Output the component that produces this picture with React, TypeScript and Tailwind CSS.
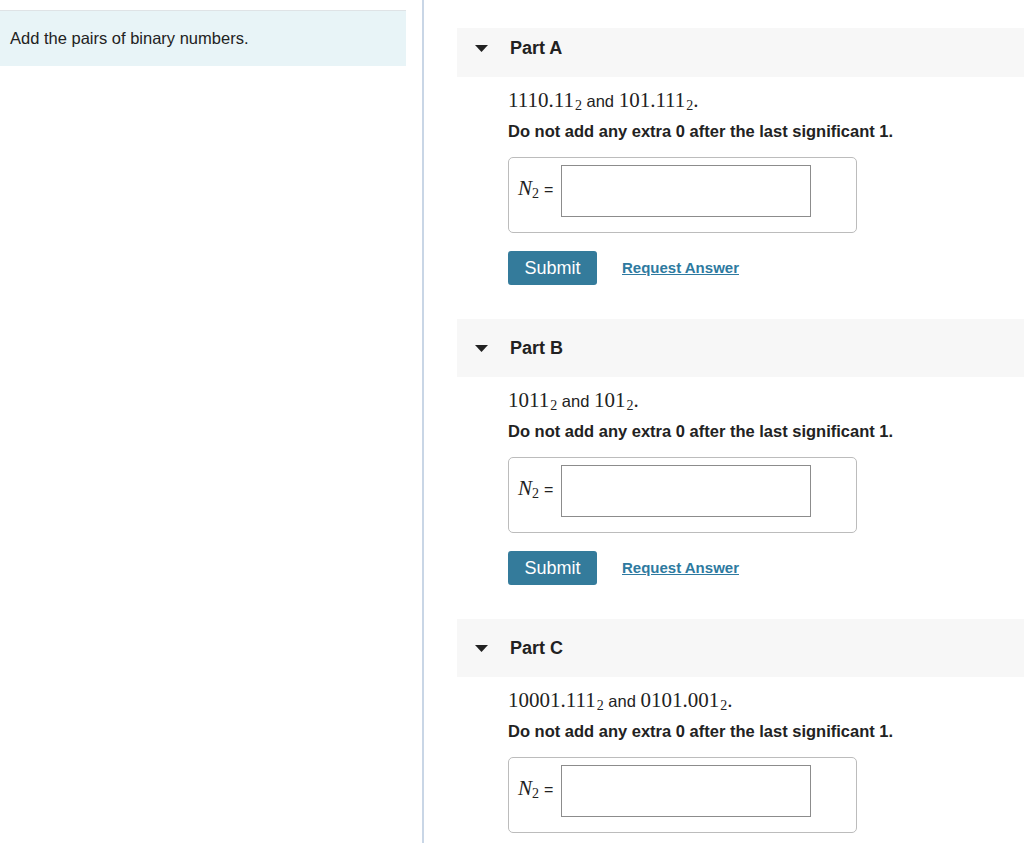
const SANS = "font-['Liberation_Sans',Arial,sans-serif]";
const SERIF = "font-['Liberation_Serif','Times_New_Roman',serif]";

function Num({ value }: { value: string }) {
  return (
    <span className={`${SERIF} text-[21px]`}>
      {value}
      <span className="relative top-[3px] ml-[1px] text-[14px]">2</span>
    </span>
  );
}

type PartProps = {
  name: string;
  a: string;
  b: string;
  first?: boolean;
  last?: boolean;
};

function Part({ name, a, b, first, last }: PartProps) {
  return (
    <section>
      <div
        className={`flex items-center bg-[#f7f7f7] pl-[18px] ${first ? "h-[49px] pb-[9px]" : "h-[58px]"}`}
      >
        <svg width="13" height="7" viewBox="0 0 13 7" className="mt-[1px]">
          <path d="M0 0 L13 0 L6.5 7 Z" fill="#222" />
        </svg>
        <h2 className="ml-[22px] text-[18px] font-bold text-[#222]">{name}</h2>
      </div>
      <div className="pl-[51px] pt-[11px]">
        <p className="text-[16.5px] leading-[24px] text-[#222]">
          <Num value={a} /> and <Num value={b} />
          <span className={`${SERIF} text-[21px]`}>.</span>
        </p>
        <p className="mt-[7px] text-[16.5px] font-bold leading-[19px] text-[#222]">
          Do not add any extra 0 after the last significant 1.
        </p>
        <div className="mt-[16px] flex h-[76px] w-[349px] items-start rounded-[5px] border border-[#bcbcbc] pl-[9px] pt-[7px]">
          <span className="mt-[13px] text-[16px] leading-[20px] text-[#222]">
            <span className={`${SERIF} text-[21px] italic`}>N</span>
            <span className={`${SERIF} relative top-[3px] text-[14px]`}>2</span>
            <span className="ml-[5px]">=</span>
          </span>
          <input
            className="ml-[8px] h-[52px] w-[250px] border border-[#8c8c8c] bg-white outline-none"
            aria-label={`${name} answer`}
          />
        </div>
        {!last && (
          <div className="mt-[18px] flex items-center">
            <button className="h-[34px] w-[89px] rounded-[3px] bg-[#347b9b] text-[18px] text-white">
              Submit
            </button>
            <a href="#" className="ml-[25px] text-[15px] font-bold text-[#2e7aa0] underline">
              Request Answer
            </a>
          </div>
        )}
      </div>
    </section>
  );
}

export default function App() {
  return (
    <div className={`${SANS} flex min-h-[843px] bg-white`}>
      <div className="w-[422px] shrink-0 pt-[10px]">
        <div className="h-[56px] w-[406px] border-t border-[#dfe3e6] bg-[#e8f4f7] pl-[10px] pt-[16px] text-[16.5px] leading-[22px] text-[#222]">
          Add the pairs of binary numbers.
        </div>
      </div>
      <div className="w-[2px] shrink-0 bg-[#c9d6e6]" />
      <div className="flex-1 pl-[33px] pt-[28px]">
        <Part name="Part A" a="1110.11" b="101.111" first />
        <div className="h-[34px]" />
        <Part name="Part B" a="1011" b="101" />
        <div className="h-[34px]" />
        <Part name="Part C" a="10001.111" b="0101.001" last />
      </div>
    </div>
  );
}
